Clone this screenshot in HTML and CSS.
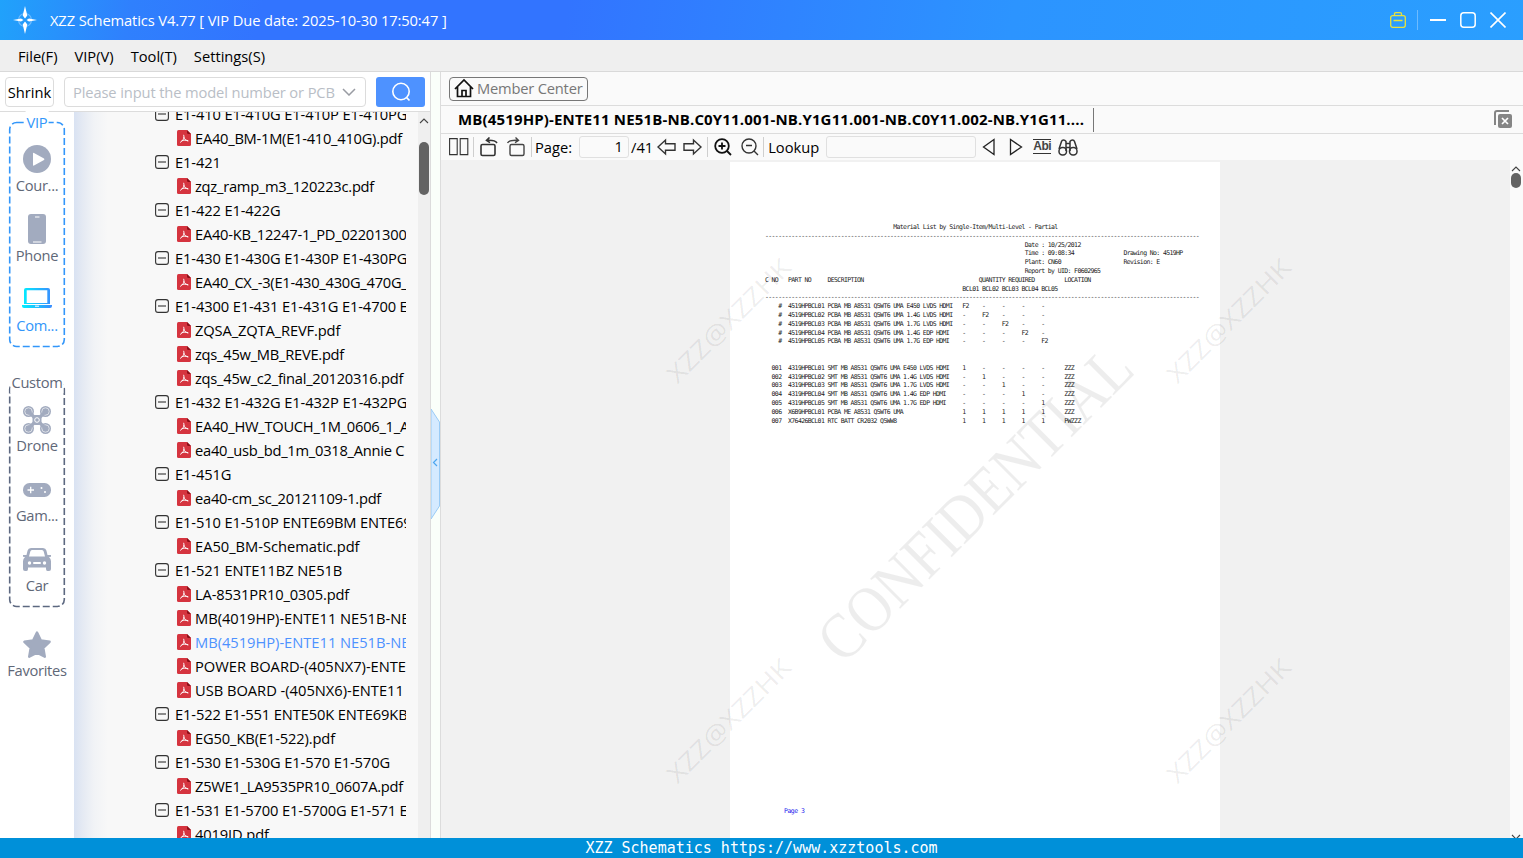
FILE: index.html
```html
<!DOCTYPE html>
<html lang="en">
<head>
  <meta charset="UTF-8">
  <meta name="viewport" content="width=device-width, initial-scale=1.0">
  <title>XZZ Schematics</title>
  <link rel="stylesheet" href="styles.css">
</head>
<body>

<!-- shared icons -->
<svg class="defs" width="0" height="0">
  <symbol id="minus" viewBox="0 0 14 14">
    <rect x=".6" y=".6" width="12.8" height="12.8" rx="2.5" fill="none" stroke="#333" stroke-width="1.1"/>
    <path d="M3 7h8" stroke="#333" stroke-width="1.1"/>
  </symbol>
  <symbol id="pdf" viewBox="0 0 14 16">
    <path d="M1.5 0H10l4 4v10.500q0 1.500-1.500 1.500h-11Q0 16 0 14.500v-13Q0 0 1.500 0z" fill="#d5343f"/>
    <path d="M10 0l4 4h-2.500Q10 4 10 2.500z" fill="#8c0f18"/>
    <path d="M6.700 5.200c.9 2.500 0 4.800-3.200 7 M6.900 7.500c.6 2 2 3 4 3.300 M4.800 10.800c2-.9 4-.9 6 0" fill="none" stroke="#fff" stroke-width="1" stroke-linecap="round"/>
  </symbol>
</svg>

<div class="app">
  <header class="titlebar">
    <svg class="logo" width="24" height="30" viewBox="0 0 24 30">
      <circle cx="12" cy="15" r="6.500" fill="none" stroke="#6fbcff" stroke-width="1.200"/>
      <path d="M12 1l2.300 9.500-2.300 3-2.300-3zM12 29l2.300-9.500-2.300-3-2.300 3zM0 15l8-1.500 2.500 1.500-2.500 1.500zM24 15l-8-1.500-2.500 1.500 2.500 1.500z" fill="#fff"/>
    </svg>
    <span class="title">XZZ Schematics V4.77 [ VIP Due date: 2025-10-30 17:50:47 ]</span>
    <div class="win-buttons">
      <svg width="16" height="16" viewBox="0 0 16 16" fill="none" stroke="#e9e23c" stroke-width="1.300"><rect x=".7" y="3.700" width="14.600" height="11.600" rx="2"/><path d="M4.500 3.500V2q0-1.300 1.300-1.300h4.400q1.300 0 1.300 1.300v1.500M3.500 8.500h9"/></svg>
      <i class="split"></i>
      <svg width="16" height="16" viewBox="0 0 16 16"><path d="M0 8h16" stroke="#fff" stroke-width="2"/></svg>
      <svg width="16" height="16" viewBox="0 0 16 16"><rect x=".8" y=".8" width="14.400" height="14.400" rx="3" fill="none" stroke="#fff" stroke-width="1.500"/></svg>
      <svg width="16" height="16" viewBox="0 0 16 16"><path d="M.5.5l15 15M15.500.5l-15 15" stroke="#fff" stroke-width="1.600"/></svg>
    </div>
  </header>

  <nav class="menu">
    <span>File(F)</span><span>VIP(V)</span><span>Tool(T)</span><span>Settings(S)</span>
  </nav>

  <main class="work">
    <section class="left">
      <div class="search">
        <button class="shrink">Shrink</button>
        <div class="combo">
          <span>Please input the model number or PCB</span>
          <svg width="14" height="8" viewBox="0 0 14 8"><path d="M1 1l6 6 6-6" fill="none" stroke="#999ca3" stroke-width="1.500"/></svg>
        </div>
        <button class="go">
          <svg width="22" height="20" viewBox="0 0 22 20"><circle cx="11" cy="9.500" r="8.200" fill="none" stroke="#fff" stroke-width="1.600"/><path d="M16.500 15.500l3 3" stroke="#fff" stroke-width="1.700"/></svg>
        </button>
      </div>

      <div class="browse">
        <aside class="cats">
          <div class="group vip">
            <svg class="frame" width="58" height="228"><rect x="1.700" y="2.500" width="54.600" height="224" rx="7" fill="none" stroke="#3296fa" stroke-width="1.600" stroke-dasharray="7 3"/></svg>
            <b class="legend">VIP</b>
            <div class="cat">
              <svg width="28" height="28" viewBox="0 0 28 28"><circle cx="14" cy="14" r="14" fill="#a2abbf"/><path d="M10 8.500v11.500q0 1 1 .6l10-5.600q.9-.7 0-1.400l-10-5.700q-1-.4-1 .6z" fill="#fff"/></svg>
              <span>Cour...</span>
            </div>
            <div class="cat">
              <svg width="28" height="30" viewBox="0 0 28 30"><rect x="5" width="18" height="30" rx="3" fill="#a2abbf"/><path d="M12 3h4.500M10 28h8.500" stroke="#fff" stroke-width="1"/></svg>
              <span>Phone</span>
            </div>
            <div class="cat on">
              <svg width="30" height="21" viewBox="0 0 30 21"><defs><linearGradient id="lap"><stop stop-color="#00f0ff"/><stop offset="1" stop-color="#3a8cff"/></linearGradient></defs><path d="M4 0h22q2 0 2 2v14H2V2Q2 0 4 0zM4.700 2.300V15h20.600V2.300zM0 17h30v1q0 2-2 2H2q-2 0-2-2z" fill="url(#lap)" fill-rule="evenodd"/><path d="M13 18.200h4" stroke="#fff"/></svg>
              <span>Com...</span>
            </div>
          </div>

          <div class="group custom">
            <svg class="frame" width="58" height="228"><rect x="1.700" y="2.500" width="54.600" height="224" rx="7" fill="none" stroke="#5c6880" stroke-width="1.600" stroke-dasharray="7 3"/></svg>
            <b class="legend">Custom</b>
            <div class="cat">
              <svg width="28" height="28" viewBox="0 0 28 28">
                <g fill="#a2abbf"><circle cx="5.500" cy="5.500" r="5.500"/><circle cx="22.500" cy="5.500" r="5.500"/><circle cx="5.500" cy="22.500" r="5.500"/><circle cx="22.500" cy="22.500" r="5.500"/></g>
                <g fill="none" stroke="#fff" stroke-width=".6"><circle cx="5.500" cy="5.500" r="3.700"/><circle cx="22.500" cy="5.500" r="3.700"/><circle cx="5.500" cy="22.500" r="3.700"/><circle cx="22.500" cy="22.500" r="3.700"/></g>
                <path d="M5.500 5.500l17 17M22.500 5.500l-17 17" stroke="#a2abbf" stroke-width="3.200" stroke-linecap="round"/>
                <rect x="9.500" y="9" width="9" height="10" rx="3" fill="#a2abbf"/><circle cx="14" cy="14" r="2.300" fill="none" stroke="#fff"/>
              </svg>
              <span>Drone</span>
            </div>
            <div class="cat">
              <svg width="28" height="14" viewBox="0 0 28 14"><rect width="28" height="14" rx="6.500" fill="#a2abbf"/><path d="M4.500 7h6.500M7.700 3.800v6.400" stroke="#fff" stroke-width="1.300"/><circle cx="18.500" cy="5" r="1" fill="#fff"/><circle cx="22" cy="9" r="1" fill="#fff"/></svg>
              <span>Gam...</span>
            </div>
            <div class="cat">
              <svg width="28" height="23" viewBox="0 0 28 23"><path d="M8 0h12q2.800 0 3.400 2.500L24.500 7H28v1.800l-2 .3q2 1.700 2 4.200V21q0 2-2 2h-1.500q-1.500 0-1.500-2v-1.500H5V21q0 2-1.500 2H2q-2 0-2-2v-7.700q0-2.500 2-4.200l-2-.3V7h3.500l1.100-4.500Q5.200 0 8 0zM6 8.500h16l-1.300-5q-.4-1.500-1.700-1.500H9Q7.700 2 7.300 3.500z" fill="#a2abbf" fill-rule="evenodd"/><circle cx="6.500" cy="15" r="1.700" fill="#fff"/><circle cx="21.500" cy="15" r="1.700" fill="#fff"/><path d="M11 15h6" stroke="#fff" stroke-width="2" stroke-linecap="round"/></svg>
              <span>Car</span>
            </div>
          </div>

          <div class="cat fav">
            <svg width="28" height="28" viewBox="0 0 28 28"><path d="M14 1.500l3.900 8 8.700 1.300-6.300 6.200 1.500 8.700L14 21.600l-7.800 4.100 1.500-8.700-6.300-6.200 8.700-1.300z" fill="#a2abbf" stroke="#a2abbf" stroke-width="2.400" stroke-linejoin="round"/></svg>
            <span>Favorites</span>
          </div>
        </aside>

        <ul class="tree">
          <li><svg><use href="#minus"/></svg>E1-410 E1-410G E1-410P E1-410PG</li>
          <li class="file tight"><svg><use href="#pdf"/></svg>EA40_BM-1M(E1-410_410G).pdf</li>
          <li><svg><use href="#minus"/></svg>E1-421</li>
          <li class="file tight"><svg><use href="#pdf"/></svg>zqz_ramp_m3_120223c.pdf</li>
          <li><svg><use href="#minus"/></svg>E1-422 E1-422G</li>
          <li class="file tight"><svg><use href="#pdf"/></svg>EA40-KB_12247-1_PD_02201300</li>
          <li><svg><use href="#minus"/></svg>E1-430 E1-430G E1-430P E1-430PG</li>
          <li class="file tight"><svg><use href="#pdf"/></svg>EA40_CX_-3(E1-430_430G_470G_</li>
          <li><svg><use href="#minus"/></svg>E1-4300 E1-431 E1-431G E1-4700 E1</li>
          <li class="file"><svg><use href="#pdf"/></svg>ZQSA_ZQTA_REVF.pdf</li>
          <li class="file tight"><svg><use href="#pdf"/></svg>zqs_45w_MB_REVE.pdf</li>
          <li class="file tight"><svg><use href="#pdf"/></svg>zqs_45w_c2_final_20120316.pdf</li>
          <li><svg><use href="#minus"/></svg>E1-432 E1-432G E1-432P E1-432PG</li>
          <li class="file tight"><svg><use href="#pdf"/></svg>EA40_HW_TOUCH_1M_0606_1_A</li>
          <li class="file tight"><svg><use href="#pdf"/></svg>ea40_usb_bd_1m_0318_Annie C</li>
          <li><svg><use href="#minus"/></svg>E1-451G</li>
          <li class="file tight"><svg><use href="#pdf"/></svg>ea40-cm_sc_20121109-1.pdf</li>
          <li><svg><use href="#minus"/></svg>E1-510 E1-510P ENTE69BM ENTE69</li>
          <li class="file loose"><svg><use href="#pdf"/></svg>EA50_BM-Schematic.pdf</li>
          <li><svg><use href="#minus"/></svg>E1-521 ENTE11BZ NE51B</li>
          <li class="file"><svg><use href="#pdf"/></svg>LA-8531PR10_0305.pdf</li>
          <li class="file loose"><svg><use href="#pdf"/></svg>MB(4019HP)-ENTE11 NE51B-NB</li>
          <li class="file loose current"><svg><use href="#pdf"/></svg>MB(4519HP)-ENTE11 NE51B-NB</li>
          <li class="file loose"><svg><use href="#pdf"/></svg>POWER BOARD-(405NX7)-ENTE</li>
          <li class="file loose"><svg><use href="#pdf"/></svg>USB BOARD -(405NX6)-ENTE11</li>
          <li><svg><use href="#minus"/></svg>E1-522 E1-551 ENTE50K ENTE69KB</li>
          <li class="file"><svg><use href="#pdf"/></svg>EG50_KB(E1-522).pdf</li>
          <li><svg><use href="#minus"/></svg>E1-530 E1-530G E1-570 E1-570G</li>
          <li class="file tight"><svg><use href="#pdf"/></svg>Z5WE1_LA9535PR10_0607A.pdf</li>
          <li><svg><use href="#minus"/></svg>E1-531 E1-5700 E1-5700G E1-571 E1</li>
          <li class="file"><svg><use href="#pdf"/></svg>4019ID.pdf</li>
        </ul>
        <div class="scroll tree-scroll">
          <svg width="10" height="6" viewBox="0 0 10 6"><path d="M1 5l4-4 4 4" fill="none" stroke="#444" stroke-width="1.100"/></svg>
          <i></i>
        </div>
      </div>
    </section>

    <div class="splitter">
      <svg width="9" height="110" viewBox="0 0 9 110"><path d="M0 0l8.500 13v84L0 110z" fill="#d5eaff" stroke="#9acbf5"/><path d="M6 50L2.500 53.500 6 57" fill="none" stroke="#4da6f0" stroke-width="1.200"/></svg>
    </div>

    <section class="viewer">
      <div class="member-row">
        <button class="member">
          <svg width="20" height="20" viewBox="0 0 20 20" fill="none" stroke="#111" stroke-width="1.700"><path d="M1 11l9-9 9 9M3.500 9v9.500h13V9M8 18.500v-6h4v6"/></svg>
          Member Center
        </button>
      </div>
      <div class="tabs">
        <span class="tab">MB(4519HP)-ENTE11 NE51B-NB.C0Y11.001-NB.Y1G11.001-NB.C0Y11.002-NB.Y1G11....</span>
        <svg width="18" height="18" viewBox="0 0 18 18"><path d="M1 15V3q0-2 2-2h12" fill="none" stroke="#858585" stroke-width="2"/><rect x="4" y="4" width="14" height="14" rx="2" fill="#858585"/><path d="M8 8l6 6M14 8l-6 6" stroke="#fff" stroke-width="1.700"/></svg>
      </div>
      <div class="tools">
        <svg width="20" height="18" viewBox="0 0 20 18" fill="none" stroke="#333" stroke-width="1.100"><path d="M.6.6h7.600v16H.6zM11.200.6h7.600v16h-7.600z"/></svg>
        <i class="sep s1"></i>
        <svg class="rot" width="20" height="20" viewBox="0 0 20 20" fill="none" stroke="#333" stroke-width="1.600"><rect x="2" y="7.500" width="14" height="11" rx="1.500"/><path d="M18 6q-2-3.200-10-2.700M10.500.5l-3 2.800 3.500 2.400"/></svg>
        <svg class="rot2" width="20" height="20" viewBox="0 0 20 20" fill="none" stroke="#444" stroke-width="1.400"><rect x="4" y="7.500" width="14" height="11" rx="1.500"/><path d="M1.500 6q2-3.200 10-2.700M9.500.5l3 2.800L9 5.700"/></svg>
        <i class="sep s2"></i>
        <span class="page-word">Page:</span>
        <div class="field page-no">1</div>
        <span class="total">/41</span>
        <svg width="19" height="18" viewBox="0 0 19 18" fill="none" stroke="#333" stroke-width="1.400"><path d="M1 9l7.500-7v3.800H18v6.400H8.500V16z"/></svg>
        <svg class="next" width="19" height="18" viewBox="0 0 19 18" fill="none" stroke="#333" stroke-width="1.400"><path d="M18 9l-7.500-7v3.800H1v6.400h9.500V16z"/></svg>
        <i class="sep s3"></i>
        <svg class="zin" width="18" height="18" viewBox="0 0 18 18" fill="none" stroke="#111" stroke-width="1.800"><circle cx="8" cy="8" r="6.800"/><path d="M4.500 8h7M8 4.500v7M13 13l4 4"/></svg>
        <svg class="zout" width="18" height="18" viewBox="0 0 18 18" fill="none" stroke="#333" stroke-width="1.400"><circle cx="8" cy="8" r="7"/><path d="M5 7.500h6M13 13l4 4"/></svg>
        <i class="sep s4"></i>
        <span>Lookup</span>
        <div class="field lookup"></div>
        <svg class="prev-hit" width="14" height="18" viewBox="0 0 14 18" fill="none" stroke="#222" stroke-width="1.300"><path d="M12 1.500v15L1.500 9z"/></svg>
        <svg class="next-hit" width="14" height="18" viewBox="0 0 14 18" fill="none" stroke="#222" stroke-width="1.300"><path d="M1.500 1.500v15L12.500 9z"/></svg>
        <span class="abi">Abi</span>
        <svg class="bino" width="20" height="17" viewBox="0 0 20 17" fill="none" stroke="#333" stroke-width="1.500"><path d="M1 10L3.500 2.500Q4 1 5.500 1T8 2.500V12M19 10l-2.500-7.500Q16 1 14.500 1T12 2.500V12M8 4.500h4M8 8.500h4"/><rect x="1" y="8.500" width="7.500" height="7.500" rx="3.500"/><rect x="11.500" y="8.500" width="7.500" height="7.500" rx="3.500"/></svg>
      </div>

      <div class="canvas">
        <div class="sheet">
<pre class="bom">
                                       Material List by Single-Item/Multi-Level - Partial
------------------------------------------------------------------------------------------------------------------------------------
                                                                               Date : 10/25/2012
                                                                               Time : 09:08:34               Drawing No: 4519HP
                                                                               Plant: CN60                   Revision: E
                                                                               Report by UID: F0602965
C NO   PART NO     DESCRIPTION                                   QUANTITY REQUIRED         LOCATION
                                                            BCL01 BCL02 BCL03 BCL04 BCL05
------------------------------------------------------------------------------------------------------------------------------------
    #  4519HPBCL01 PCBA MB A8531 Q5WT6 UMA E450 LVDS HDMI   F2    -     -     -     -
    #  4519HPBCL02 PCBA MB A8531 Q5WT6 UMA 1.4G LVDS HDMI   -     F2    -     -     -
    #  4519HPBCL03 PCBA MB A8531 Q5WT6 UMA 1.7G LVDS HDMI   -     -     F2    -     -
    #  4519HPBCL04 PCBA MB A8531 Q5WT6 UMA 1.4G EDP HDMI    -     -     -     F2    -
    #  4519HPBCL05 PCBA MB A8531 Q5WT6 UMA 1.7G EDP HDMI    -     -     -     -     F2


  001  4319HPBCL01 SMT MB A8531 Q5WT6 UMA E450 LVDS HDMI    1     -     -     -     -      ZZZ
  002  4319HPBCL02 SMT MB A8531 Q5WT6 UMA 1.4G LVDS HDMI    -     1     -     -     -      ZZZ
  003  4319HPBCL03 SMT MB A8531 Q5WT6 UMA 1.7G LVDS HDMI    -     -     1     -     -      ZZZ
  004  4319HPBCL04 SMT MB A8531 Q5WT6 UMA 1.4G EDP HDMI     -     -     -     1     -      ZZZ
  005  4319HPBCL05 SMT MB A8531 Q5WT6 UMA 1.7G EDP HDMI     -     -     -     -     1      ZZZ
  006  X6B9HPBCL01 PCBA ME A8531 Q5WT6 UMA                  1     1     1     1     1      ZZZ
  007  X76426BCL01 RTC BATT CR2032 Q5WW8                    1     1     1     1     1      PWZZZ
</pre>
          <span class="page-label">Page 3</span>
        </div>
        <!-- watermarks run across the sheet and the grey margin -->
        <svg class="marks" width="1069" height="678" viewBox="441 160 1069 678">
          <g class="mark">
            <text transform="translate(677.500 384.500) rotate(-45)" textLength="163" lengthAdjust="spacingAndGlyphs">XZZ@XZZHK</text>
            <text transform="translate(1177.500 384.500) rotate(-45)" textLength="163" lengthAdjust="spacingAndGlyphs">XZZ@XZZHK</text>
            <text transform="translate(677.500 784.500) rotate(-45)" textLength="163" lengthAdjust="spacingAndGlyphs">XZZ@XZZHK</text>
            <text transform="translate(1177.500 784.500) rotate(-45)" textLength="163" lengthAdjust="spacingAndGlyphs">XZZ@XZZHK</text>
          </g>
          <text class="conf" transform="translate(843.500 665.500) rotate(-45)" textLength="415" lengthAdjust="spacingAndGlyphs">CONFIDENTIAL</text>
        </svg>
        <div class="scroll view-scroll">
          <svg width="10" height="6" viewBox="0 0 10 6"><path d="M1 5l4-4 4 4" fill="none" stroke="#444" stroke-width="1.100"/></svg>
          <i></i>
          <svg class="down" width="10" height="4" viewBox="0 0 10 4"><path d="M1 1l4 4 4-4" fill="none" stroke="#444" stroke-width="1.100"/></svg>
        </div>
      </div>
    </section>
  </main>

  <footer class="status">XZZ Schematics https://www.xzztools.com</footer>
</div>

</body>
</html>
```
FILE: styles.css
```css
* { box-sizing: border-box; }

body {
  margin: 0;
  font-family: "Open Sans", "Noto Sans", sans-serif;
  font-size: 14.7px;
  color: #000;
  overflow: hidden;
}

svg { flex-shrink: 0; display: block; }
.defs { position: absolute; }

.app {
  display: flex;
  flex-direction: column;
  width: 1523px;
  height: 858px;
  background: #fff;
}

/* title bar */
.titlebar {
  height: 40px;
  flex-shrink: 0;
  display: flex;
  align-items: center;
  padding: 0 17px 0 13px;
  background: linear-gradient(100deg, #20a2fb 0, #2f80fd 130px, #3274ff 260px, #3274ff 560px, #2c94ff 1000px, #2a9fff 1523px);
  color: #fff;
}

.title { margin-left: 13px; white-space: nowrap; letter-spacing: -.11px; }

.win-buttons {
  margin-left: auto;
  display: flex;
  align-items: center;
  gap: 14px;
}

.split { width: 1px; height: 20px; background: #6dbbff; margin: 0 -2px 0 -3px; }

.menu {
  height: 32px;
  flex-shrink: 0;
  display: flex;
  align-items: center;
  gap: 17px;
  padding: 0 0 0 18px;
  background: #efefef;
  border-bottom: 1px solid #d9d9d9;
}

.work { flex: 1; min-height: 0; display: flex; }

/* left panel */
.left {
  width: 431px;
  display: flex;
  flex-direction: column;
  border-right: 1px solid #dcdcdc;
}

.search {
  height: 40px;
  flex-shrink: 0;
  display: flex;
  align-items: center;
  padding: 0 5px;
  border-bottom: 1px solid #dcdcdc;
}

button { font: inherit; padding: 0; }

.shrink {
  width: 49px;
  height: 30px;
  border: 1px solid #dcdcdc;
  border-radius: 4px;
  background: #fff;
  color: #000;
}

.combo {
  width: 302px;
  height: 30px;
  margin: 0 10px;
  padding: 0 9px 0 8px;
  display: flex;
  align-items: center;
  justify-content: space-between;
  border: 1px solid #dcdcdc;
  border-radius: 4px;
  color: #b9bec6;
  letter-spacing: -.12px;
  white-space: nowrap;
}

.go {
  width: 49px;
  height: 30px;
  display: flex;
  align-items: center;
  justify-content: center;
  border: 0;
  border-radius: 3px;
  background: #4e92ff;
}

.browse { flex: 1; min-height: 0; display: flex; }

.cats {
  width: 74px;
  flex-shrink: 0;
  display: flex;
  flex-direction: column;
  align-items: center;
  padding-top: 8px;
  background: #fff;
  color: #5f6878;
  letter-spacing: -.3px;
}

.group {
  position: relative;
  width: 58px;
  height: 228px;
  padding-top: 19px;
  margin-bottom: 32px;
}

.frame { position: absolute; left: 0; top: 0; }

.legend {
  position: absolute;
  left: 50%;
  top: -9px;
  transform: translateX(-50%);
  font-weight: 400;
  line-height: 22px;
  padding: 0 1px;
  background: #fff;
}

.vip .legend { color: #3296fa; }

.cat {
  height: 70px;
  padding-top: 3px;
  display: flex;
  flex-direction: column;
  align-items: center;
}

.cat > svg { margin: auto; }
.cat span { flex-shrink: 0; line-height: 20px; height: 34px; }
.cat.on { color: #3296fa; }
.custom { margin-bottom: 16px; }
.custom .cat, .fav { padding-top: 5px; }

.tree {
  flex: 1;
  margin: 0;
  padding: 0 12px 0 81px;
  list-style: none;
  overflow: hidden;
  letter-spacing: -.13px;
  background: linear-gradient(90deg, #d9e2f2 0, #e5eaf3 9px, #f1f3f6 20px, #f8f8f8 34px);
}

.tree li {
  display: flex;
  align-items: center;
  gap: 6px;
  height: 24px;
  overflow: hidden;
  white-space: nowrap;
  line-height: 24px;
}

.tree li:first-child { margin-top: -10px; }
.tree svg { width: 14px; height: 14px; }
.tree .file { padding-left: 22px; gap: 4px; }
.tree .file svg { height: 16px; }
.tree .tight { letter-spacing: -.26px; }
.tree .loose { letter-spacing: -.02px; }
.tree .current { color: #4e92ff; }

.scroll {
  display: flex;
  flex-direction: column;
  align-items: center;
}

.scroll i { width: 10px; border-radius: 5px; background: #636363; }

.tree-scroll { width: 12px; padding-top: 6px; background: #efefef; }
.tree-scroll i { height: 53px; margin-top: 18px; }

.splitter {
  width: 10px;
  display: flex;
  align-items: center;
  padding-top: 18px;
  background: #fafffa;
  border-right: 1px solid #dcdcdc;
}

/* viewer */
.viewer { flex: 1; min-width: 0; display: flex; flex-direction: column; background: #fafafa; }

.member-row {
  height: 34px;
  flex-shrink: 0;
  display: flex;
  align-items: center;
  padding-left: 8px;
  border-bottom: 1px solid #dcdcdc;
}

.member {
  width: 139px;
  height: 24px;
  display: flex;
  align-items: center;
  gap: 3px;
  padding: 0 0 2px 4px;
  border: 1px solid #777;
  border-radius: 4px;
  background: #fafafa;
  color: #777;
  letter-spacing: -.2px;
  white-space: nowrap;
}

.tabs {
  height: 28px;
  flex-shrink: 0;
  display: flex;
  align-items: center;
  justify-content: space-between;
  padding: 0 11px 0 17px;
  border-bottom: 1px solid #dcdcdc;
}

.tabs svg { margin-bottom: 2px; }

.tab {
  width: 636px;
  height: 24px;
  line-height: 22px;
  border-right: 1px solid #777;
  font-weight: 700;
  font-size: 15px;
  letter-spacing: .15px;
  white-space: nowrap;
}

.tools {
  height: 26px;
  flex-shrink: 0;
  display: flex;
  align-items: center;
  padding-left: 8px;
}

.tools > span { margin-bottom: 1px; }
.sep { width: 1px; height: 20px; background: #cfcfcf; }
.s1 { margin: 0 5px 0 4px; }
.rot2 { margin-left: 7px; }
.s2 { margin: 0 3px 0 5px; }
.page-word { width: 38px; }

.field { height: 22px; border: 1px solid #e0e0e0; border-radius: 3px; line-height: 19px; }
.page-no { width: 50px; margin-left: 6px; padding-right: 5px; text-align: right; }
.total { margin: 0 4px 0 2px; }
.next { margin-left: 7px; }
.s3 { margin: 0 6px 0 5px; }
.zout { margin-left: 9px; }
.s4 { margin: 0 4px 0 4px; }
.lookup { width: 150px; margin-left: 7px; }
.prev-hit { margin-left: 6px; }
.next-hit { margin-left: 13px; }

.abi {
  margin-left: 10px;
  border-top: 1px solid #333;
  border-bottom: 1px solid #333;
  font: bold 12px/13px "Liberation Sans", sans-serif;
  letter-spacing: -.5px;
  color: #444;
}

.bino { margin-left: 7px; }

.canvas {
  position: relative;
  flex: 1;
  min-height: 0;
  display: flex;
  background: #f1f1f1;
}

.sheet {
  width: 490px;
  margin: 2px 0 0 289px;
  padding: 61px 0 0 35px;
  background: #fff;
  overflow: hidden;
}

.bom {
  height: 588px;
  margin: 0;
  font: 6.5px/8.8px "DejaVu Sans Mono", monospace;
  letter-spacing: -.625px;
  text-rendering: geometricPrecision;
  color: #222;
}

.page-label {
  display: block;
  margin: -4px 0 0 19px;
  font: 6.5px/8px "DejaVu Sans Mono", monospace;
  letter-spacing: -.5px;
  text-rendering: geometricPrecision;
  color: #22e;
}

.marks { position: absolute; left: 0; top: 0; }
.mark { font: 24.8px "Open Sans", sans-serif; fill: rgba(0, 0, 0, .08); }
.conf { font: 65px "Liberation Serif", serif; fill: rgba(0, 0, 0, .07); }

.view-scroll { width: 13px; margin-left: auto; padding: 6px 1px 0 0; background: #fafafa; }
.view-scroll i { height: 15px; margin-top: 1px; }
.view-scroll .down { margin-top: auto; }

.status {
  height: 20px;
  flex-shrink: 0;
  background: #0090d9;
  color: #fff;
  text-align: center;
  font: 15px/20px "DejaVu Sans Mono", monospace;
}
```
